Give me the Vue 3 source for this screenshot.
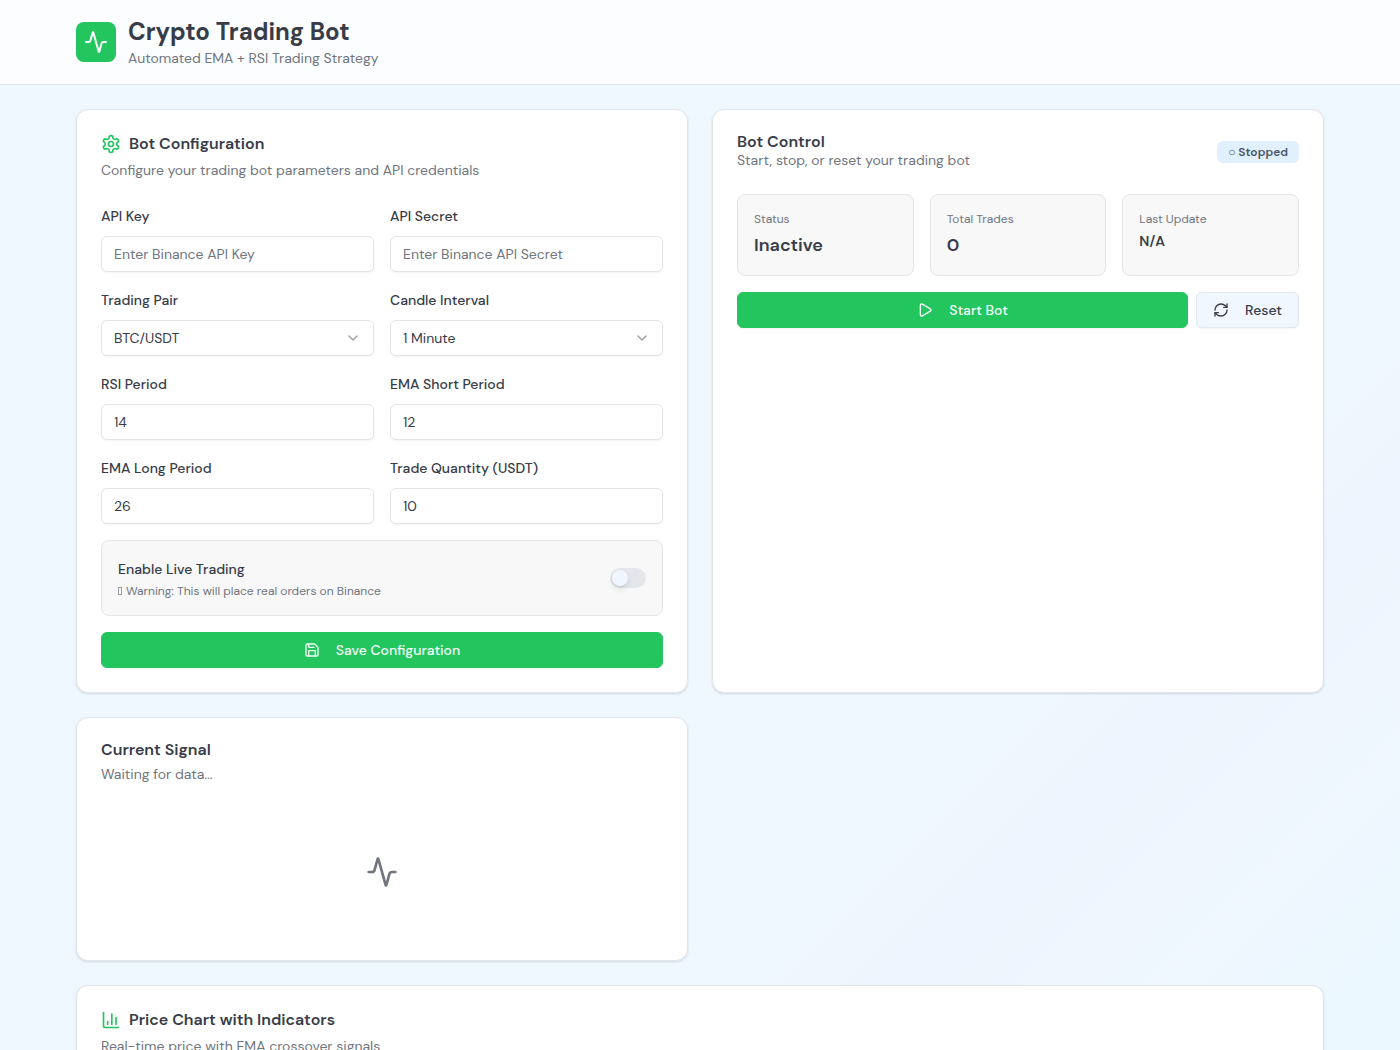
<script setup>
import { ref } from 'vue'

const config = ref({
  apiKey: '',
  apiSecret: '',
  pair: 'BTC/USDT',
  interval: '1 Minute',
  rsi: 14,
  emaShort: 12,
  emaLong: 26,
  quantity: 10,
  live: false
})

const fields = [
  { key: 'apiKey', label: 'API Key', type: 'text', placeholder: 'Enter Binance API Key' },
  { key: 'apiSecret', label: 'API Secret', type: 'password', placeholder: 'Enter Binance API Secret' },
  { key: 'pair', label: 'Trading Pair', options: ['BTC/USDT', 'ETH/USDT', 'BNB/USDT'] },
  { key: 'interval', label: 'Candle Interval', options: ['1 Minute', '5 Minutes', '15 Minutes', '1 Hour'] },
  { key: 'rsi', label: 'RSI Period', type: 'number' },
  { key: 'emaShort', label: 'EMA Short Period', type: 'number' },
  { key: 'emaLong', label: 'EMA Long Period', type: 'number' },
  { key: 'quantity', label: 'Trade Quantity (USDT)', type: 'number' }
]

const stats = [
  { label: 'Status', value: 'Inactive' },
  { label: 'Total Trades', value: '0' },
  { label: 'Last Update', value: 'N/A', small: true }
]
</script>

<template>
  <div class="page">
    <header class="topbar">
      <div class="container brand">
        <div class="logo">
          <svg class="icon icon-lg" viewBox="0 0 24 24" aria-hidden="true">
            <path d="M22 12h-2.48a2 2 0 0 0-1.93 1.46l-2.35 8.36a.25.25 0 0 1-.48 0L9.24 2.18a.25.25 0 0 0-.48 0l-2.35 8.36A2 2 0 0 1 4.49 12H2" />
          </svg>
        </div>
        <div>
          <h1>Crypto Trading Bot</h1>
          <p class="muted">Automated EMA + RSI Trading Strategy</p>
        </div>
      </div>
    </header>

    <main class="container grid">
      <section class="card">
        <div class="card-head">
          <h2 class="with-icon">
            <svg class="icon icon-md green" viewBox="0 0 24 24" aria-hidden="true">
              <path d="M12.22 2h-.44a2 2 0 0 0-2 2v.18a2 2 0 0 1-1 1.73l-.43.25a2 2 0 0 1-2 0l-.15-.08a2 2 0 0 0-2.73.73l-.22.38a2 2 0 0 0 .73 2.73l.15.1a2 2 0 0 1 1 1.72v.51a2 2 0 0 1-1 1.74l-.15.09a2 2 0 0 0-.73 2.73l.22.38a2 2 0 0 0 2.73.73l.15-.08a2 2 0 0 1 2 0l.43.25a2 2 0 0 1 1 1.73V20a2 2 0 0 0 2 2h.44a2 2 0 0 0 2-2v-.18a2 2 0 0 1 1-1.73l.43-.25a2 2 0 0 1 2 0l.15.08a2 2 0 0 0 2.73-.73l.22-.39a2 2 0 0 0-.73-2.73l-.15-.08a2 2 0 0 1-1-1.74v-.5a2 2 0 0 1 1-1.74l.15-.09a2 2 0 0 0 .73-2.73l-.22-.38a2 2 0 0 0-2.73-.73l-.15.08a2 2 0 0 1-2 0l-.43-.25a2 2 0 0 1-1-1.73V4a2 2 0 0 0-2-2z" />
              <circle cx="12" cy="12" r="3" />
            </svg>
            Bot Configuration
          </h2>
          <p class="muted">Configure your trading bot parameters and API credentials</p>
        </div>

        <form class="form" @submit.prevent>
          <div class="fields">
            <div v-for="f in fields" :key="f.key" class="field">
              <label class="label" :for="f.key">{{ f.label }}</label>
              <div v-if="f.options" class="select">
                <select :id="f.key" v-model="config[f.key]" class="control">
                  <option v-for="o in f.options" :key="o">{{ o }}</option>
                </select>
                <svg class="icon icon-sm chevron" viewBox="0 0 24 24" aria-hidden="true">
                  <path d="m6 9 6 6 6-6" />
                </svg>
              </div>
              <input v-else :id="f.key" v-model="config[f.key]" class="control" :type="f.type" :placeholder="f.placeholder" />
            </div>
          </div>

          <div class="live">
            <div>
              <label class="label" for="live">Enable Live Trading</label>
              <p class="warning"><span class="warning-mark" aria-hidden="true"></span>Warning: This will place real orders on Binance</p>
            </div>
            <input id="live" v-model="config.live" class="switch" type="checkbox" role="switch" />
          </div>

          <button class="btn primary" type="submit">
            <svg class="icon icon-sm" viewBox="0 0 24 24" aria-hidden="true">
              <path d="M15.2 3a2 2 0 0 1 1.4.6l3.8 3.8a2 2 0 0 1 .6 1.4V19a2 2 0 0 1-2 2H5a2 2 0 0 1-2-2V5a2 2 0 0 1 2-2z" />
              <path d="M17 21v-7a1 1 0 0 0-1-1H8a1 1 0 0 0-1 1v7" />
              <path d="M7 3v4a1 1 0 0 0 1 1h7" />
            </svg>
            Save Configuration
          </button>
        </form>
      </section>

      <section class="card">
        <div class="card-head split">
          <div>
            <h2>Bot Control</h2>
            <p class="muted">Start, stop, or reset your trading bot</p>
          </div>
          <span class="badge">○ Stopped</span>
        </div>
        <div class="stats">
          <div v-for="s in stats" :key="s.label" class="stat">
            <p class="stat-label">{{ s.label }}</p>
            <p class="stat-value" :class="{ small: s.small }">{{ s.value }}</p>
          </div>
        </div>
        <div class="actions">
          <button class="btn primary grow" type="button">
            <svg class="icon icon-sm" viewBox="0 0 24 24" aria-hidden="true">
              <path d="M5 5a2 2 0 0 1 3.008-1.728l11.997 6.998a2 2 0 0 1 .003 3.458l-12 7A2 2 0 0 1 5 19z" />
            </svg>
            Start Bot
          </button>
          <button class="btn outline" type="button">
            <svg class="icon icon-sm" viewBox="0 0 24 24" aria-hidden="true">
              <path d="M3 12a9 9 0 0 1 9-9 9.75 9.75 0 0 1 6.74 2.74L21 8" />
              <path d="M21 3v5h-5" />
              <path d="M21 12a9 9 0 0 1-9 9 9.75 9.75 0 0 1-6.74-2.74L3 16" />
              <path d="M8 16H3v5" />
            </svg>
            Reset
          </button>
        </div>
      </section>

      <section class="card">
        <div class="card-head">
          <h2>Current Signal</h2>
          <p class="muted">Waiting for data...</p>
        </div>
        <div class="empty">
          <svg class="icon icon-xl" viewBox="0 0 24 24" aria-hidden="true">
            <path d="M22 12h-2.48a2 2 0 0 0-1.93 1.46l-2.35 8.36a.25.25 0 0 1-.48 0L9.24 2.18a.25.25 0 0 0-.48 0l-2.35 8.36A2 2 0 0 1 4.49 12H2" />
          </svg>
        </div>
      </section>

      <section class="card wide">
        <div class="card-head">
          <h2 class="with-icon">
            <svg class="icon icon-md green" viewBox="0 0 24 24" aria-hidden="true">
              <path d="M3 3v16a2 2 0 0 0 2 2h16" />
              <path d="M18 17V9" />
              <path d="M13 17V5" />
              <path d="M8 17v-3" />
            </svg>
            Price Chart with Indicators
          </h2>
          <p class="muted">Real-time price with EMA crossover signals</p>
        </div>
      </section>
    </main>
  </div>
</template>

<style>
body {
  margin: 0;
}
</style>

<style scoped>
.page {
  min-height: 100vh;
  background: linear-gradient(135deg, #f0f8ff 0%, #f0f8ff 68%, #eef5fe 74%, #eff7ff 86%, #ebf8ff 94%, #ebf8ff 100%);
  color: #373c48;
  font-family: "DM Sans", "Liberation Sans", sans-serif;
  font-size: 14px;
  line-height: 20px;
}

.page *,
.page *::before {
  box-sizing: border-box;
}

h1,
h2,
p {
  margin: 0;
}

.container {
  max-width: 1280px;
  margin: 0 auto;
  padding: 0 16px;
  box-sizing: border-box;
}

.topbar {
  padding: 16px 0;
  background: rgba(255, 255, 255, 0.7);
  border-bottom: 1px solid #e1e6ec;
}

.brand {
  display: flex;
  align-items: center;
  gap: 12px;
}

.logo {
  display: grid;
  place-items: center;
  width: 40px;
  height: 40px;
  border-radius: 8px;
  background: #22c55e;
  color: #fff;
}

h1 {
  font-size: 24px;
  line-height: 32px;
  font-weight: 700;
}

h2 {
  font-size: 16px;
  line-height: 16px;
  font-weight: 600;
}

.muted {
  color: #70757e;
}

.icon {
  flex: none;
  fill: none;
  stroke: currentColor;
  stroke-width: 2;
  stroke-linecap: round;
  stroke-linejoin: round;
}

.icon-sm {
  width: 16px;
  height: 16px;
}

.icon-md {
  width: 20px;
  height: 20px;
}

.icon-lg {
  width: 24px;
  height: 24px;
}

.icon-xl {
  width: 32px;
  height: 32px;
}

.green {
  color: #22c55e;
}

.grid {
  display: grid;
  grid-template-columns: repeat(2, minmax(0, 1fr));
  gap: 24px;
  padding-top: 24px;
  padding-bottom: 24px;
}

.card {
  padding: 24px;
  background: #fff;
  border: 1px solid #e2e6ea;
  border-radius: 12px;
  box-shadow: 0 1px 3px rgba(0, 0, 0, 0.08), 0 1px 2px rgba(0, 0, 0, 0.06);
}

.wide {
  grid-column: 1 / -1;
}

.card-head {
  display: flex;
  flex-direction: column;
  gap: 6px;
  margin-bottom: 24px;
}

.card-head.split {
  flex-direction: row;
  align-items: center;
  justify-content: space-between;
}

.with-icon {
  display: flex;
  align-items: center;
  gap: 8px;
}

.form {
  display: flex;
  flex-direction: column;
  gap: 16px;
}

.fields {
  display: grid;
  grid-template-columns: repeat(2, minmax(0, 1fr));
  gap: 16px;
}

.field {
  display: flex;
  flex-direction: column;
  gap: 8px;
}

.label {
  display: block;
  line-height: 24px;
  font-weight: 500;
}

.control {
  width: 100%;
  height: 36px;
  padding: 0 12px;
  border: 1px solid #e5e5e8;
  border-radius: 6px;
  background: #fff;
  color: inherit;
  font: inherit;
  box-shadow: 0 1px 2px rgba(0, 0, 0, 0.05);
  appearance: none;
}

.control::placeholder {
  color: #70757e;
  opacity: 1;
}

.select {
  position: relative;
}

.select .control {
  display: block;
}

.chevron {
  position: absolute;
  right: 13px;
  top: 10px;
  opacity: 0.5;
  pointer-events: none;
}

.live {
  display: flex;
  align-items: center;
  justify-content: space-between;
  padding: 16px;
  border: 1px solid #e5e5e8;
  border-radius: 8px;
  background: #f8f8f9;
}

.warning {
  display: flex;
  align-items: center;
  gap: 4px;
  margin-top: 2px;
  font-size: 12px;
  line-height: 16px;
  color: #70757e;
}

.warning-mark {
  width: 4px;
  height: 8px;
  border: 1px solid #9a9ea5;
}

.switch {
  appearance: none;
  width: 36px;
  height: 20px;
  margin: 0;
  padding: 2px;
  border-radius: 10px;
  background: #e4e6eb;
}

.switch::before {
  content: "";
  display: block;
  width: 16px;
  height: 16px;
  border-radius: 50%;
  background: #f0f5ff;
  box-shadow: 0 4px 6px rgba(0, 0, 0, 0.08), 0 1px 2px rgba(0, 0, 0, 0.08);
}

.switch:checked {
  background: #22c55e;
}

.switch:checked::before {
  margin-left: 16px;
}

.btn {
  display: flex;
  align-items: center;
  justify-content: center;
  gap: 16px;
  height: 36px;
  padding: 0 16px;
  border: 1px solid transparent;
  border-radius: 6px;
  font: inherit;
  font-weight: 500;
  box-shadow: 0 1px 2px rgba(0, 0, 0, 0.05);
}

.primary {
  border-color: #22c55e;
  background: #22c55e;
  color: #f4fff8;
}

.outline {
  border-color: #dfe7ef;
  background: #f0f7ff;
  color: #373c48;
}

.grow {
  flex: 1;
}

.badge {
  padding: 3px 11px;
  border-radius: 6px;
  background: #e0f0fe;
  color: #4b5563;
  font-size: 12px;
  line-height: 16px;
  font-weight: 600;
}

.stats {
  display: grid;
  grid-template-columns: repeat(3, minmax(0, 1fr));
  gap: 16px;
}

.stat {
  padding: 16px;
  border: 1px solid #e5e5e8;
  border-radius: 8px;
  background: #f8f8f9;
}

.stat-label {
  margin-bottom: 4px;
  font-size: 12px;
  line-height: 16px;
  color: #70757e;
}

.stat-value {
  font-size: 18px;
  line-height: 28px;
  font-weight: 600;
}

.stat-value.small {
  font-size: 14px;
  line-height: 20px;
}

.actions {
  display: flex;
  gap: 8px;
  margin-top: 16px;
}

.empty {
  display: grid;
  place-items: center;
  height: 128px;
  color: #70757e;
}
</style>
